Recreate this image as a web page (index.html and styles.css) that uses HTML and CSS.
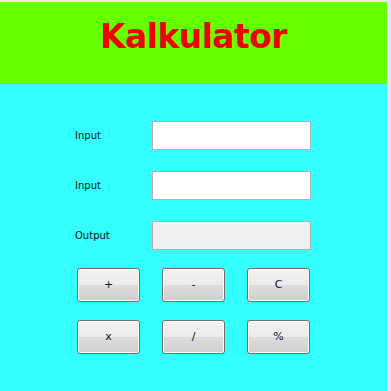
FILE: index.html
```html
<!DOCTYPE html>
<html lang="en">
<head>
  <meta charset="UTF-8" />
  <title>Kalkulator</title>
  <meta name="viewport" content="width=device-width, initial-scale=1.0" />
  <link rel="stylesheet" href="styles.css">
</head>
<body>
  <div class="window">
    <div class="header">
      <h1>Kalkulator</h1>
    </div>

    <div class="content">
      <div class="form">
        <div class="row">
          <label for="a">Input</label>
          <input type="text" id="a" />
        </div>
        <div class="row">
          <label for="b">Input</label>
          <input type="text" id="b" />
        </div>
        <div class="row">
          <label for="out">Output</label>
          <input type="text" id="out" class="output" readonly />
        </div>
      </div>

      <div class="buttons">
        <button>+</button>
        <button>-</button>
        <button>C</button>
        <button>x</button>
        <button>/</button>
        <button>%</button>
      </div>
    </div>
  </div>
</body>
</html>
```

FILE: styles.css
```css
body {
  margin: 0;
  background-color: #e6e6f6;
  font-family: 'DejaVu Sans', sans-serif;
}

.window {
  width: 387px;
  height: 389px;
  margin-top: 2px;
  display: flex;
  flex-direction: column;
}

.header {
  height: 82px;
  background-color: #66ff00;
  display: flex;
  justify-content: center;
  padding-top: 15px;
  box-sizing: border-box;
}

.header h1 {
  margin: 0;
  color: #f20000;
  font-size: 33px;
  font-weight: bold;
  line-height: 40px;
  letter-spacing: -0.6px;
}

.content {
  flex: 1;
  background-color: #33ffff;
  padding: 37px 0 0 75px;
}

.form {
  display: flex;
  flex-direction: column;
  gap: 21px;
}

.row {
  display: flex;
  align-items: center;
}

.row label {
  width: 77px;
  font-size: 10px;
  color: #111;
}

.row input {
  width: 159px;
  height: 29px;
  box-sizing: border-box;
  margin: 0;
  border: 1px solid #a9b0bc;
  background-color: #fff;
  outline: none;
}

.row input.output {
  background-color: #f0f0f0;
}

.buttons {
  margin-top: 18px;
  margin-left: 2px;
  display: grid;
  grid-template-columns: repeat(3, 63px);
  column-gap: 22px;
  row-gap: 18px;
}

.buttons button {
  height: 34px;
  padding: 0 0 2px;
  border: 1px solid #707070;
  border-radius: 3px;
  box-shadow: inset 0 0 0 1px #fcfcfc;
  background: linear-gradient(#f2f2f2 0%, #ebebeb 50%, #dddddd 50%, #cfcfcf 100%);
  font-family: 'DejaVu Sans', sans-serif;
  font-size: 11px;
  color: #111;
}
```
